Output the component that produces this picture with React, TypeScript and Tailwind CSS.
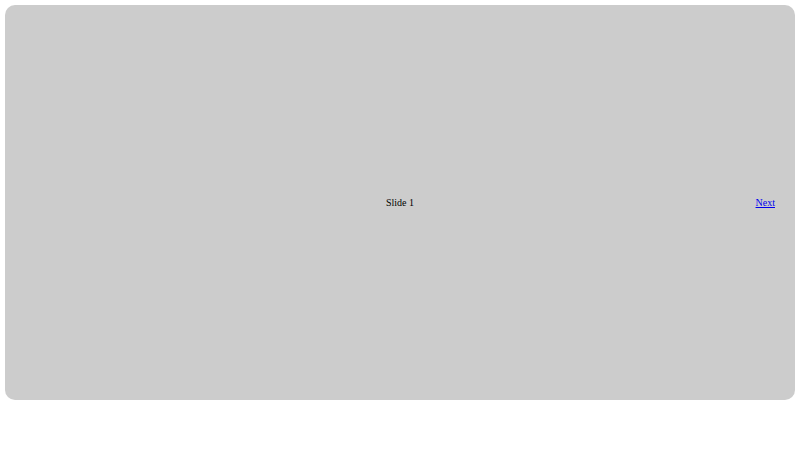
export default function App() {
  return (
    <div className="p-[5px] font-['Liberation_Serif',serif] text-[10px] text-black">
      <div className="relative flex h-[395px] items-center justify-center rounded-[10px] bg-[#cccccc]">
        <span>Slide 1</span>
        <div className="absolute inset-y-0 right-5 flex items-center">
          <a href="#" className="text-[#0000ee] underline">
            Next
          </a>
        </div>
      </div>
    </div>
  );
}
